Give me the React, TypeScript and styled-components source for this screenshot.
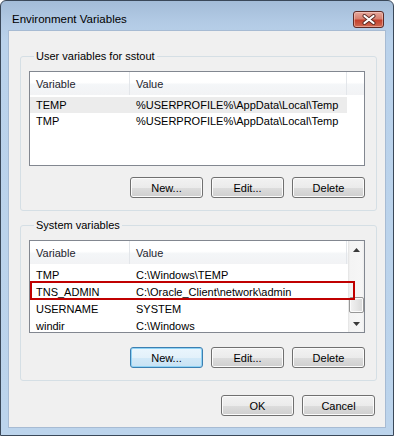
import React from 'react';
import styled, {createGlobalStyle} from 'styled-components';

const GlobalStyle = createGlobalStyle`
    html, body {
        margin: 0;
        padding: 0;
        background: #ffffff;
    }

    body {
        font-family: 'Liberation Sans', Arial, sans-serif;
        font-size: 11px;
        color: #000000;
    }

    * {
        box-sizing: border-box;
    }
`;

const Window = styled.div`
    width: 394px;
    height: 436px;
    border: 1px solid #3a4859;
    border-radius: 6px 6px 0 0;
    background: linear-gradient(180deg, #a3bcd8 0px, #b3cbe5 22px, #bad2eb 40px, #bcd4ec 100%);
    padding-bottom: 7px;
    display: flex;
    flex-direction: column;
`;

const TitleBar = styled.div`
    height: 29px;
    flex: none;
    display: flex;
    align-items: center;
    justify-content: space-between;
    padding: 7px 9px 0 11px;
`;

const Title = styled.span`
    font-family: 'Liberation Sans', Arial, sans-serif;
    font-size: 11.5px;
    color: #000000;
`;

const CloseButton = styled.div`
    width: 31px;
    height: 17px;
    border: 1px solid #5e2a25;
    border-radius: 3px;
    background: linear-gradient(180deg, #e5a89d 0%, #d7806f 45%, #c4402c 55%, #cf6a52 100%);
    box-shadow: inset 0 0 0 1px rgba(255, 220, 210, 0.45);
    display: flex;
    align-items: center;
    justify-content: center;
`;

const Client = styled.div`
    flex: 1;
    margin: 0 7px;
    background: #f0f0f0;
    border: 1px solid #a7bbd3;
    padding: 19px 8px 11px 11px;
    display: flex;
    flex-direction: column;
`;

const GroupBox = styled.fieldset<{$gap: number}>`
    margin: 0;
    margin-top: ${(p) => p.$gap}px;
    padding: 8px 11px 12px 8px;
    border: 1px solid #d5dfe5;
    border-radius: 3px;
    min-width: 0;
`;

const Legend = styled.legend`
    margin-left: 5px;
    padding: 0 2px;
    line-height: 13px;
    font-size: 11px;
`;

const ListView = styled.div<{$height: number}>`
    height: ${(p) => p.$height}px;
    border: 1px solid #828790;
    background: #ffffff;
    display: flex;
    overflow: hidden;
`;

const ListMain = styled.div`
    flex: 1;
    min-width: 0;
    display: flex;
    flex-direction: column;
`;

const Header = styled.div`
    height: 23px;
    flex: none;
    display: flex;
    background: linear-gradient(180deg, #ffffff 0%, #ffffff 45%, #f4f6f8 55%, #f2f3f5 100%);
`;

const HeaderCell = styled.div<{$width: number}>`
    width: ${(p) => p.$width}px;
    flex: none;
    padding-left: 6px;
    display: flex;
    align-items: center;
    color: #1f252e;
    border-right: 1px solid #e3e6ea;
`;

const HeaderFill = styled.div`
    flex: 1;
`;

const ListBody = styled.div`
    padding-top: 2px;
    display: flex;
    flex-direction: column;
`;

const Row = styled.div<{$height: number; $selected?: boolean; $marked?: boolean}>`
    position: relative;
    width: 317px;
    height: ${(p) => p.$height}px;
    flex: none;
    display: flex;
    align-items: center;
    background: ${(p) => (p.$selected ? '#ececec' : 'transparent')};

    &::after {
        content: '';
        display: ${(p) => (p.$marked ? 'block' : 'none')};
        position: absolute;
        top: -2px;
        bottom: 0;
        left: 0;
        right: -8px;
        border: 2px solid #c00000;
    }
`;

const Cell = styled.div<{$width: number}>`
    width: ${(p) => p.$width}px;
    flex: none;
    padding-left: 6px;
    white-space: nowrap;
    overflow: hidden;
`;

const ScrollBar = styled.div`
    width: 16px;
    flex: none;
    display: flex;
    flex-direction: column;
    background: linear-gradient(90deg, #e2e2e2 0px, #f4f4f4 2px, #f6f6f6 14px, #ededed 16px);
`;

const ScrollArrow = styled.div`
    height: 17px;
    flex: none;
    display: flex;
    align-items: center;
    justify-content: center;
`;

const ScrollTrack = styled.div`
    flex: 1;
    display: flex;
    flex-direction: column;
    justify-content: flex-end;
    padding: 0 0 2px 1px;
`;

const ScrollThumb = styled.div`
    height: 16px;
    border: 1px solid #979797;
    border-radius: 2px;
    background: linear-gradient(90deg, #f2f2f2 0%, #e6e6e6 50%, #d8d8d8 100%);
    box-shadow: inset 0 0 0 1px #fbfbfb;
`;

const ButtonRow = styled.div<{$gap: number}>`
    margin-top: ${(p) => p.$gap}px;
    display: flex;
    justify-content: flex-end;
    gap: 8px;
`;

const Button = styled.div<{$focused?: boolean}>`
    width: 73px;
    height: 21px;
    display: flex;
    align-items: center;
    justify-content: center;
    border: 1px solid ${(p) => (p.$focused ? '#3c7fb1' : '#707070')};
    border-radius: 3px;
    background: ${(p) => (p.$focused
        ? 'linear-gradient(180deg, #eaf6fd 0%, #e3f1fa 50%, #d2e9f8 50%, #c8e2f3 100%)'
        : 'linear-gradient(180deg, #f2f2f2 0%, #ebebeb 50%, #dddddd 50%, #cfcfcf 100%)')};
    box-shadow: inset 0 0 0 1px ${(p) => (p.$focused ? '#8fd3f5' : '#fbfbfb')};
    color: #000000;
`;

const Footer = styled.div`
    margin-top: 14px;
    padding-right: 2px;
    display: flex;
    justify-content: flex-end;
    gap: 8px;
`;

type Variable = {name: string; value: string; selected?: boolean; marked?: boolean};

const userVars: Variable[] = [
    {name: 'TEMP', value: '%USERPROFILE%\\AppData\\Local\\Temp', selected: true},
    {name: 'TMP', value: '%USERPROFILE%\\AppData\\Local\\Temp'},
];

const systemVars: Variable[] = [
    {name: 'TMP', value: 'C:\\Windows\\TEMP'},
    {name: 'TNS_ADMIN', value: 'C:\\Oracle_Client\\network\\admin', marked: true},
    {name: 'USERNAME', value: 'SYSTEM'},
    {name: 'windir', value: 'C:\\Windows'},
];

const CloseGlyph = () => (
    <svg width='14' height='11' viewBox='0 0 14 11'>
        <path d='M2.5 2 L11.5 9 M11.5 2 L2.5 9' stroke='#5a2a24' strokeWidth='4' strokeLinecap='round'/>
        <path d='M2.5 2 L11.5 9 M11.5 2 L2.5 9' stroke='#ffffff' strokeWidth='2.2' strokeLinecap='round'/>
    </svg>
);

const Arrow = ({up}: {up?: boolean}) => (
    <svg width='7' height='4' viewBox='0 0 7 4'>
        <path d={up ? 'M0 4 L3.5 0 L7 4 Z' : 'M0 0 L7 0 L3.5 4 Z'} fill='#3a3a3a'/>
    </svg>
);

type ListProps = {
    rows: Variable[];
    height: number;
    rowHeight: number;
    scroll?: boolean;
};

const VariableList = ({rows, height, rowHeight, scroll}: ListProps) => (
    <ListView $height={height}>
        <ListMain>
            <Header>
                <HeaderCell $width={100}>Variable</HeaderCell>
                <HeaderCell $width={217}>Value</HeaderCell>
                <HeaderFill/>
            </Header>
            <ListBody>
                {rows.map((row) => (
                    <Row
                        key={row.name}
                        $height={rowHeight}
                        $selected={row.selected}
                        $marked={row.marked}
                    >
                        <Cell $width={100}>{row.name}</Cell>
                        <Cell $width={217}>{row.value}</Cell>
                    </Row>
                ))}
            </ListBody>
        </ListMain>
        {scroll && (
            <ScrollBar>
                <ScrollArrow><Arrow up={true}/></ScrollArrow>
                <ScrollTrack>
                    <ScrollThumb/>
                </ScrollTrack>
                <ScrollArrow><Arrow/></ScrollArrow>
            </ScrollBar>
        )}
    </ListView>
);

export default function App() {
    return (
        <>
            <GlobalStyle/>
            <Window>
                <TitleBar>
                    <Title>Environment Variables</Title>
                    <CloseButton><CloseGlyph/></CloseButton>
                </TitleBar>
                <Client>
                    <GroupBox $gap={0}>
                        <Legend>User variables for sstout</Legend>
                        <VariableList
                            rows={userVars}
                            height={95}
                            rowHeight={16}
                        />
                        <ButtonRow $gap={11}>
                            <Button>New...</Button>
                            <Button>Edit...</Button>
                            <Button>Delete</Button>
                        </ButtonRow>
                    </GroupBox>
                    <GroupBox $gap={8}>
                        <Legend>System variables</Legend>
                        <VariableList
                            rows={systemVars}
                            height={93}
                            rowHeight={17}
                            scroll={true}
                        />
                        <ButtonRow $gap={14}>
                            <Button $focused={true}>New...</Button>
                            <Button>Edit...</Button>
                            <Button>Delete</Button>
                        </ButtonRow>
                    </GroupBox>
                    <Footer>
                        <Button>OK</Button>
                        <Button>Cancel</Button>
                    </Footer>
                </Client>
            </Window>
        </>
    );
}
